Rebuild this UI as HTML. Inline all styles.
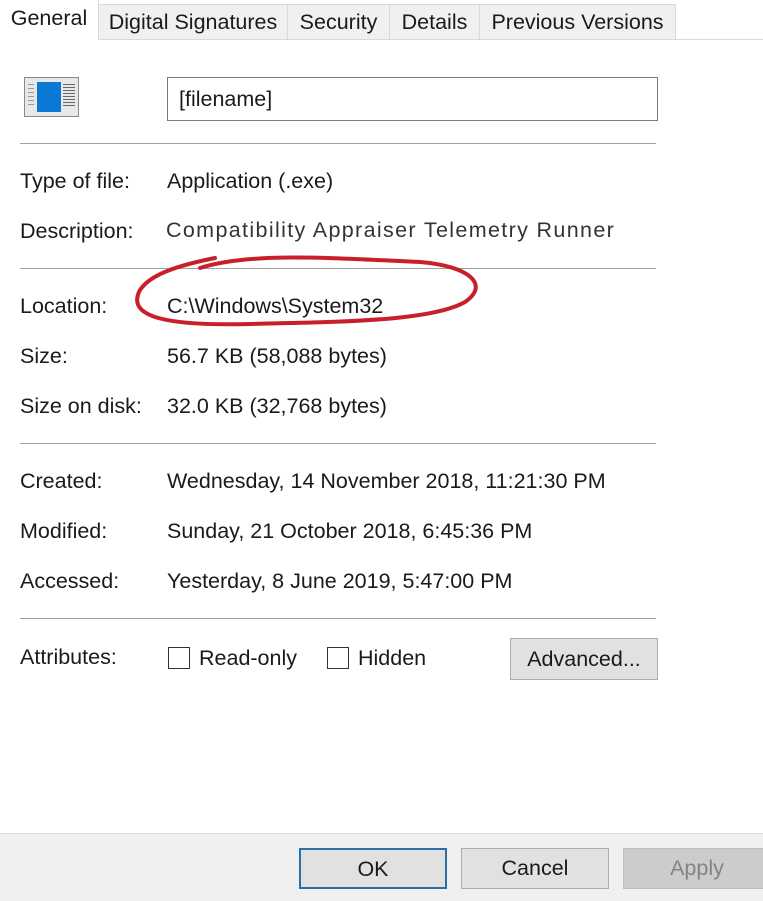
<!DOCTYPE html>
<html><head><style>
body{margin:0;width:763px;height:900px;background:#fff;position:relative;overflow:hidden;font-family:"Liberation Sans",Arial,sans-serif;color:#1a1a1a;font-size:21.5px}
.a{position:absolute;white-space:nowrap}
.tab{position:absolute;top:4px;height:35px;background:#f0f0f0;border:1px solid #d9d9d9;border-bottom:none;box-sizing:border-box;line-height:34px;text-align:center;font-size:21.5px}
.hr{position:absolute;left:20px;width:636px;height:1px;background:#a0a0a0}
.btn{position:absolute;top:848px;height:41px;box-sizing:border-box;border:1px solid #adadad;background:#e1e1e1;text-align:center;line-height:39px}
.cb{position:absolute;width:22px;height:22px;border:1px solid #333;box-sizing:border-box;background:#fff}
</style></head><body>
<div class="a" style="left:0;top:39px;width:763px;height:1px;background:#d9d9d9"></div>
<div class="a" style="left:0;top:0;width:98px;height:40px;background:#fff;border-right:1px solid #d9d9d9;line-height:36px;text-align:center">General</div>
<div class="tab" style="left:98px;width:190px">Digital Signatures</div>
<div class="tab" style="left:287px;width:103px">Security</div>
<div class="tab" style="left:389px;width:91px">Details</div>
<div class="tab" style="left:479px;width:197px">Previous Versions</div>

<div class="a" style="left:24px;top:77px;width:55px;height:40px;border:1px solid #8a8a8a;background:#e8e8e8;box-sizing:border-box">
<div style="position:absolute;left:12px;top:4px;width:24px;height:30px;background:#0a78d4"></div>
<div style="position:absolute;left:38px;top:6px;width:12px;height:24px;background:repeating-linear-gradient(#666 0 1px,transparent 1px 3px)"></div>
<div style="position:absolute;left:3px;top:6px;width:6px;height:24px;background:repeating-linear-gradient(#999 0 1px,transparent 1px 4px)"></div>
</div>
<div class="a" style="left:167px;top:77px;width:491px;height:44px;border:1px solid #7a7a7a;box-sizing:border-box;padding-left:11px;line-height:42px">[filename]</div>
<div class="hr" style="top:143px"></div>

<div class="a" style="left:20px;top:169px">Type of file:</div><div class="a" style="left:167px;top:169px">Application (.exe)</div>
<div class="a" style="left:20px;top:219px">Description:</div><div class="a" style="left:166px;top:218px;letter-spacing:1.35px;color:#333">Compatibility Appraiser Telemetry Runner</div>
<div class="hr" style="top:268px"></div>
<div class="a" style="left:20px;top:294px">Location:</div><div class="a" style="left:167px;top:294px">C:\Windows\System32</div>
<div class="a" style="left:20px;top:344px">Size:</div><div class="a" style="left:167px;top:344px">56.7 KB (58,088 bytes)</div>
<div class="a" style="left:20px;top:394px">Size on disk:</div><div class="a" style="left:167px;top:394px">32.0 KB (32,768 bytes)</div>
<div class="hr" style="top:443px"></div>
<div class="a" style="left:20px;top:469px">Created:</div><div class="a" style="left:167px;top:469px">Wednesday, 14 November 2018, 11:21:30 PM</div>
<div class="a" style="left:20px;top:519px">Modified:</div><div class="a" style="left:167px;top:519px">Sunday, 21 October 2018, 6:45:36 PM</div>
<div class="a" style="left:20px;top:569px">Accessed:</div><div class="a" style="left:167px;top:569px">Yesterday, 8 June 2019, 5:47:00 PM</div>
<div class="hr" style="top:618px"></div>
<div class="a" style="left:20px;top:645px">Attributes:</div>
<div class="cb" style="left:168px;top:647px"></div><div class="a" style="left:199px;top:646px">Read-only</div>
<div class="cb" style="left:327px;top:647px"></div><div class="a" style="left:358px;top:646px">Hidden</div>
<div class="a" style="left:510px;top:638px;width:148px;height:42px;border:1px solid #adadad;background:#e1e1e1;box-sizing:border-box;text-align:center;line-height:40px">Advanced...</div>

<svg class="a" style="left:0;top:0" width="763" height="900"><path d="M200 268 C250 252 330 258 420 262 C470 266 490 285 465 302 C430 322 330 322 250 324 C170 326 125 318 140 290 C150 275 175 266 215 258" fill="none" stroke="#c8202a" stroke-width="4" stroke-linecap="round"/></svg>

<div class="a" style="left:0;top:833px;width:763px;height:67px;background:#f0f0f0;border-top:1px solid #dcdcdc"></div>
<div class="btn" style="left:299px;width:148px;border:2px solid #2a6fa8">OK</div>
<div class="btn" style="left:461px;width:148px">Cancel</div>
<div class="btn" style="left:623px;width:148px;background:#ccc;border-color:#bfbfbf;color:#838383">Apply</div>
</body></html>
